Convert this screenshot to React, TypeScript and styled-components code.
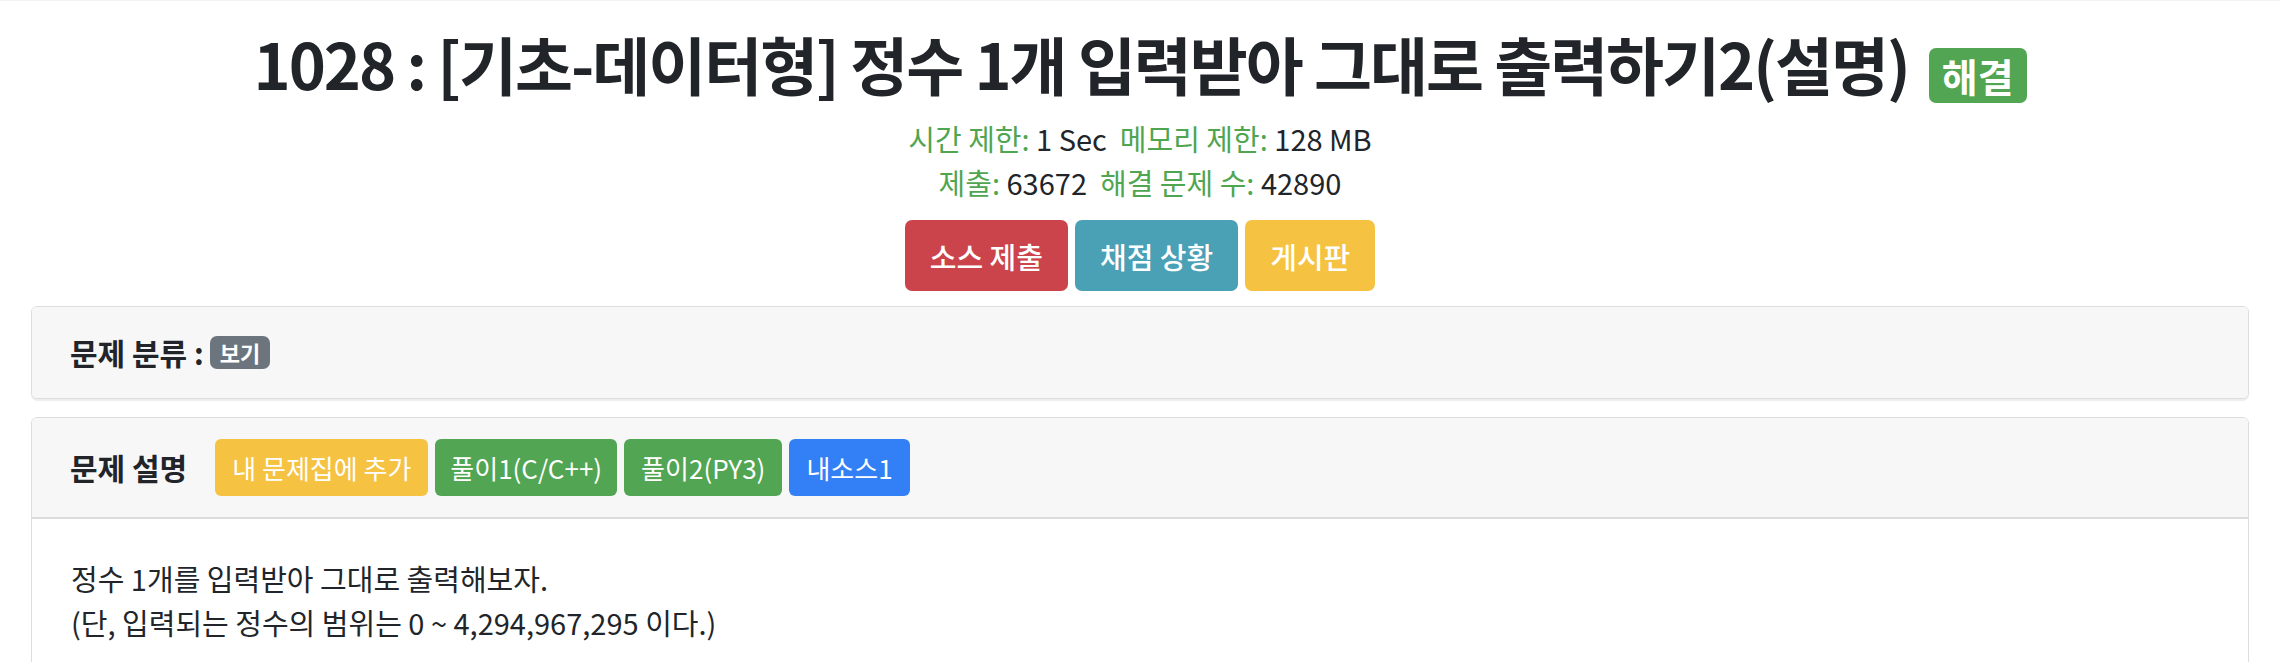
import React from 'react';
import styled, { createGlobalStyle } from 'styled-components';

const GlobalStyle = createGlobalStyle`
  html, body {
    margin: 0;
    padding: 0;
    background: #ffffff;
  }
  body {
    font-family: 'Noto Sans CJK KR', 'Noto Sans', sans-serif;
    color: #212529;
    border-top: 1px solid #f3f3f3;
  }
`;

const Page = styled.div`
  padding: 0 31px;
`;

const Header = styled.div`
  text-align: center;
`;

const Title = styled.h1`
  margin: 23px 0 0 0;
  font-size: 63px;
  font-weight: 700;
  line-height: 78px;
  color: #212529;
  letter-spacing: -2px;
`;

const TitleBadge = styled.span`
  display: inline-block;
  margin-left: 20px;
  padding: 8px 13px;
  font-size: 39px;
  line-height: 1;
  font-weight: 700;
  color: #ffffff;
  background: #52a552;
  border-radius: 7px;
  vertical-align: -2px;
  letter-spacing: 0;
`;

const InfoBlock = styled.div`
  margin-top: 13px;
  font-size: 29px;
  line-height: 44px;
`;

const Label = styled.span`
  color: #4fa550;
`;

const ButtonRow = styled.div`
  display: flex;
  justify-content: center;
  gap: 7px;
  margin-top: 16px;
`;

const BigButton = styled.a<{ $bg: string }>`
  display: inline-flex;
  align-items: center;
  justify-content: center;
  box-sizing: border-box;
  height: 71px;
  padding: 0 25px;
  font-size: 29px;
  font-weight: 500;
  color: #ffffff;
  background: ${(p) => p.$bg};
  border-radius: 7px;
  text-decoration: none;
`;

const Panel = styled.div<{ $open?: boolean }>`
  margin-top: ${(p) => (p.$open ? '18px' : '15px')};
  border: 1px solid #dedede;
  border-radius: 6px;
  background: #ffffff;
  box-shadow: 0 2px 1px rgba(0, 0, 0, 0.07);
  overflow: hidden;
`;

const PanelHeader = styled.div<{ $divided?: boolean }>`
  display: flex;
  align-items: center;
  background: #f7f7f7;
  padding: ${(p) => (p.$divided ? '21px 38px' : '23px 38px')};
  border-bottom: ${(p) => (p.$divided ? '2px solid #dcdcdc' : 'none')};
`;

const HeaderTitle = styled.span`
  font-size: 30px;
  font-weight: 700;
  line-height: 45px;
  color: #212529;
`;

const TagBadge = styled.span`
  display: inline-block;
  margin-left: 6px;
  padding: 4px 10px;
  font-size: 22px;
  line-height: 25px;
  font-weight: 700;
  color: #ffffff;
  background: #6c757d;
  border-radius: 7px;
`;

const SmallButtons = styled.div`
  display: flex;
  gap: 7px;
  margin-left: 28px;
`;

const SmallButton = styled.a<{ $bg: string; $pad?: number }>`
  display: inline-flex;
  align-items: center;
  justify-content: center;
  box-sizing: border-box;
  height: 57px;
  padding: 0 ${(p) => p.$pad ?? 17}px;
  font-size: 26px;
  color: #ffffff;
  background: ${(p) => p.$bg};
  border-radius: 6px;
  text-decoration: none;
`;

const PanelBody = styled.div`
  padding: 37px 39px 40px;
  font-size: 29px;
  line-height: 44px;
  color: #212529;
`;

const Line = styled.p`
  margin: 0;
`;

export default function App() {
  return (
    <>
      <GlobalStyle />
      <Page>
        <Header>
          <Title>
            1028 : [기초-데이터형] 정수 1개 입력받아 그대로 출력하기2(설명)
            <TitleBadge>해결</TitleBadge>
          </Title>
          <InfoBlock>
            <div>
              <Label>시간 제한:</Label> 1 Sec&nbsp; <Label>메모리 제한:</Label> 128 MB
            </div>
            <div>
              <Label>제출:</Label> 63672&nbsp; <Label>해결 문제 수:</Label> 42890
            </div>
          </InfoBlock>
          <ButtonRow>
            <BigButton $bg="#cc444b">소스 제출</BigButton>
            <BigButton $bg="#4aa0b5">채점 상황</BigButton>
            <BigButton $bg="#f5c242">게시판</BigButton>
          </ButtonRow>
        </Header>

        <Panel>
          <PanelHeader>
            <HeaderTitle>문제 분류 :</HeaderTitle>
            <TagBadge>보기</TagBadge>
          </PanelHeader>
        </Panel>

        <Panel $open>
          <PanelHeader $divided>
            <HeaderTitle>문제 설명</HeaderTitle>
            <SmallButtons>
              <SmallButton $bg="#f5c242">내 문제집에 추가</SmallButton>
              <SmallButton $bg="#52a552" $pad={15}>풀이1(C/C++)</SmallButton>
              <SmallButton $bg="#52a552">풀이2(PY3)</SmallButton>
              <SmallButton $bg="#3380f6">내소스1</SmallButton>
            </SmallButtons>
          </PanelHeader>
          <PanelBody>
            <Line>정수 1개를 입력받아 그대로 출력해보자.</Line>
            <Line>(단, 입력되는 정수의 범위는 0 ~ 4,294,967,295 이다.)</Line>
          </PanelBody>
        </Panel>
      </Page>
    </>
  );
}
